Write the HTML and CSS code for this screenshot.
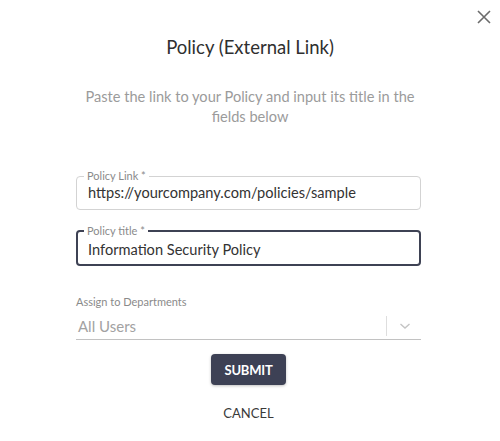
FILE: index.html
```html
<!DOCTYPE html>
<html lang="en">
<head>
<meta charset="utf-8">
<title>Policy (External Link)</title>
<link rel="stylesheet" href="styles.css">
</head>
<body>
<div class="dialog">
  <button class="close" type="button" aria-label="Close">
    <svg width="14" height="14" viewBox="0 0 14 14"><path d="M1 1L13 13M13 1L1 13" stroke="#6b6b6b" stroke-width="1.6" fill="none"/></svg>
  </button>
  <h2 class="title">Policy (External Link)</h2>
  <p class="subtitle">Paste the link to your Policy and input its title in the fields below</p>
  <form class="form">
    <fieldset class="field">
      <legend class="field-label">Policy Link *</legend>
      <div class="field-value">https://yourcompany.com/policies/sample</div>
    </fieldset>
    <fieldset class="field field-focused">
      <legend class="field-label">Policy title *</legend>
      <div class="field-value">Information Security Policy</div>
    </fieldset>
    <div class="select">
      <div class="select-label">Assign to Departments</div>
      <div class="select-control">
        <span class="select-value">All Users</span>
        <span class="select-sep"></span>
        <svg class="select-chevron" width="12" height="8" viewBox="0 0 12 8"><path d="M1.5 2L6 6L10.5 2" stroke="#c4c4c4" stroke-width="1.4" fill="none"/></svg>
      </div>
    </div>
    <div class="actions">
      <button class="submit" type="button">SUBMIT</button>
      <button class="cancel" type="button">CANCEL</button>
    </div>
  </form>
</div>
</body>
</html>
```
FILE: styles.css
```css
html, body {
  margin: 0;
  padding: 0;
  background: #fff;
}
body {
  font-family: Lato, "Noto Sans", sans-serif;
  color: #333;
}
.dialog {
  position: relative;
  width: 500px;
  height: 441px;
  box-sizing: border-box;
  padding-top: 35px;
}
.close {
  position: absolute;
  top: 10px;
  right: 9px;
  width: 14px;
  height: 14px;
  padding: 0;
  border: 0;
  background: none;
  display: flex;
}
.title {
  margin: 0;
  font-size: 18.5px;
  line-height: 24px;
  font-weight: 400;
  text-align: center;
  color: #2f2f2f;
}
.subtitle {
  width: 340px;
  margin: 28px auto 0;
  font-size: 14.6px;
  line-height: 20px;
  text-align: center;
  color: #9b9b9b;
}
.form {
  margin: 42px 79px 0 76px;
  display: flex;
  flex-direction: column;
}
.field {
  margin: 0;
  padding: 0 11px 6px;
  border: 1px solid #d3d3d3;
  border-radius: 4px;
  min-width: 0;
}
.field + .field {
  margin-top: 14px;
}
.field-label {
  padding: 0 3px;
  margin-left: -4px;
  font-size: 11px;
  line-height: 14px;
  color: #8a8a8a;
}
.field-value {
  font-size: 14.6px;
  line-height: 20px;
  color: #333;
  white-space: nowrap;
}
.field-focused {
  border: 2px solid #3e4254;
  padding: 2px 10px 4px;
}
.select {
  margin-top: 29px;
  display: flex;
  flex-direction: column;
}
.select-label {
  font-size: 11px;
  line-height: 14px;
  color: #8a8a8a;
}
.select-control {
  display: flex;
  align-items: center;
  height: 26px;
  margin-top: 4px;
  border-bottom: 1px solid #c2c2c2;
  padding-left: 2px;
}
.select-value {
  flex: 1;
  font-size: 15px;
  color: #a2a2a2;
}
.select-sep {
  width: 1px;
  height: 20px;
  background: #dedede;
  margin-right: 12px;
}
.select-chevron {
  margin-right: 10px;
}
.actions {
  margin-top: 14px;
  display: flex;
  flex-direction: column;
  align-items: center;
}
.submit {
  width: 75px;
  height: 31px;
  border: 0;
  border-radius: 4px;
  background: #3d4155;
  color: #fff;
  font-family: inherit;
  font-weight: 700;
  font-size: 13px;
  letter-spacing: -0.2px;
  box-shadow: 0 1px 3px rgba(0,0,0,0.25);
}
.cancel {
  margin-top: 20px;
  border: 0;
  background: none;
  padding: 0;
  font-family: inherit;
  font-size: 13px;
  line-height: 16px;
  color: #3a3a3a;
}
```
